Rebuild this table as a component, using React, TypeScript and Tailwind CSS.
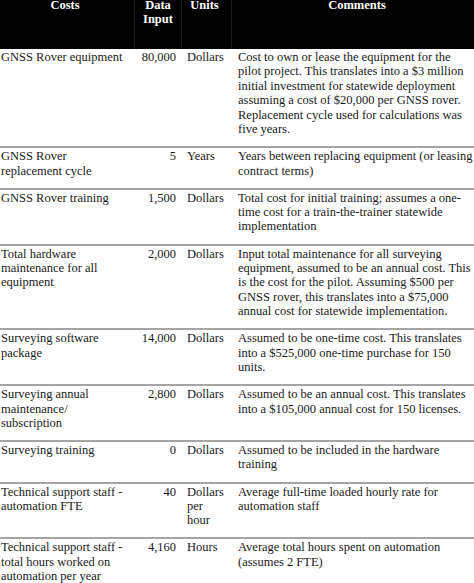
import React from "react";

type Row = {
  cost: string[];
  value: string;
  units: string[];
  comment: string[];
};

const rows: Row[] = [
  {
    cost: ["GNSS Rover equipment"],
    value: "80,000",
    units: ["Dollars"],
    comment: [
      "Cost to own or lease the equipment for the",
      "pilot project. This translates into a $3 million",
      "initial investment for statewide deployment",
      "assuming a cost of $20,000 per GNSS rover.",
      "Replacement cycle used for calculations was",
      "five years.",
    ],
  },
  {
    cost: ["GNSS Rover", "replacement cycle"],
    value: "5",
    units: ["Years"],
    comment: ["Years between replacing equipment (or leasing", "contract terms)"],
  },
  {
    cost: ["GNSS Rover training"],
    value: "1,500",
    units: ["Dollars"],
    comment: [
      "Total cost for initial training; assumes a one-",
      "time cost for a train-the-trainer statewide",
      "implementation",
    ],
  },
  {
    cost: ["Total hardware", "maintenance for all", "equipment"],
    value: "2,000",
    units: ["Dollars"],
    comment: [
      "Input total maintenance for all surveying",
      "equipment, assumed to be an annual cost. This",
      "is the cost for the pilot. Assuming $500 per",
      "GNSS rover, this translates into a $75,000",
      "annual cost for statewide implementation.",
    ],
  },
  {
    cost: ["Surveying software", "package"],
    value: "14,000",
    units: ["Dollars"],
    comment: [
      "Assumed to be one-time cost. This translates",
      "into a $525,000 one-time purchase for 150",
      "units.",
    ],
  },
  {
    cost: ["Surveying annual", "maintenance/", "subscription"],
    value: "2,800",
    units: ["Dollars"],
    comment: [
      "Assumed to be an annual cost. This translates",
      "into a $105,000 annual cost for 150 licenses.",
    ],
  },
  {
    cost: ["Surveying training"],
    value: "0",
    units: ["Dollars"],
    comment: ["Assumed to be included in the hardware", "training"],
  },
  {
    cost: ["Technical support staff -", "automation FTE"],
    value: "40",
    units: ["Dollars", "per", "hour"],
    comment: ["Average full-time loaded hourly rate for", "automation staff"],
  },
  {
    cost: ["Technical support staff -", "total hours worked on", "automation per year"],
    value: "4,160",
    units: ["Hours"],
    comment: ["Average total hours spent on automation", "(assumes 2 FTE)"],
  },
];

function Lines({ lines }: { lines: string[] }) {
  return (
    <>
      {lines.map((l, i) => (
        <span key={i} className="block whitespace-nowrap">
          {l}
        </span>
      ))}
    </>
  );
}

export default function App() {
  return (
    <div
      className="h-[583px] w-[474px] overflow-hidden bg-white text-[12.5px] leading-[14.4px] text-[#1a1a1a]"
      style={{ fontFamily: '"Liberation Serif", "Times New Roman", serif' }}
    >
      {/* Header */}
      <div className="grid h-[49px] grid-cols-[135px_47px_50px_1fr] bg-black font-bold leading-[14px] text-white">
        <div className="border-r border-[#1d1d1d] text-center">
          <div className="-mt-[2px] pr-[4px]">Costs</div>
        </div>
        <div className="border-r border-[#1d1d1d] text-center">
          <div className="-mt-[2px]">
            Data
            <br />
            Input
          </div>
        </div>
        <div className="border-r border-[#1d1d1d] text-center">
          <div className="-mt-[2px] pr-[4px]">Units</div>
        </div>
        <div className="text-center">
          <div className="-mt-[2px] pl-[8px]">Comments</div>
        </div>
      </div>

      {rows.map((r, i) => (
        <div
          key={i}
          className="grid grid-cols-[135px_47px_50px_1fr] border-b-2 border-[#a5a5a5] pt-[1px] pb-[9.7px]"
        >
          <div className="pl-[1px]">
            <Lines lines={r.cost} />
          </div>
          <div className="pr-[6px] text-right">{r.value}</div>
          <div className="pl-[5px]">
            <Lines lines={r.units} />
          </div>
          <div className="pl-[6px]">
            <Lines lines={r.comment} />
          </div>
        </div>
      ))}
    </div>
  );
}
